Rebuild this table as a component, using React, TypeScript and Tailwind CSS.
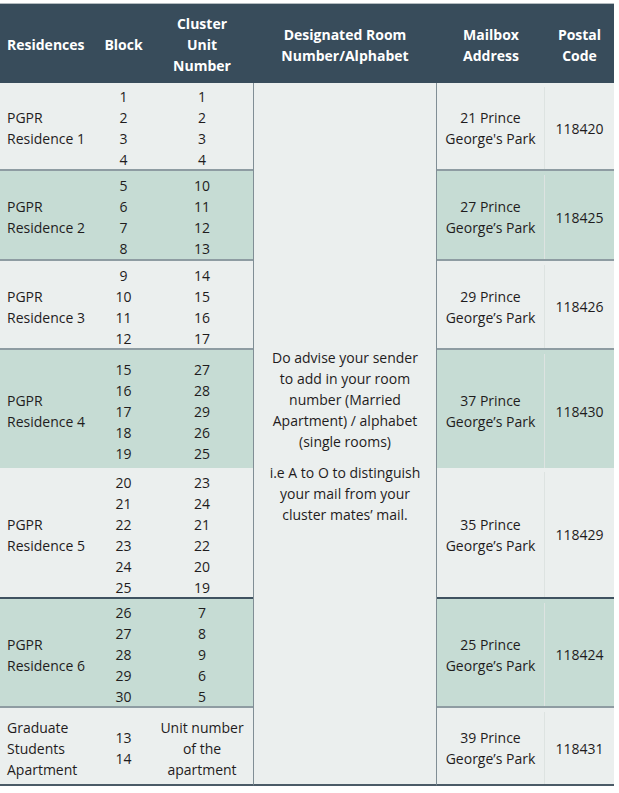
type Row = {
  name: string[];
  blocks: string[];
  units: string[];
  address: string[];
  postal: string;
  green: boolean;
  height: string;
  border: string;
};

const rows: Row[] = [
  {
    name: ["PGPR", "Residence 1"],
    blocks: ["1", "2", "3", "4"],
    units: ["1", "2", "3", "4"],
    address: ["21 Prince", "George's Park"],
    postal: "118420",
    green: false,
    height: "h-[88px]",
    border: "border-b-2 border-[#8e9ca2]",
  },
  {
    name: ["PGPR", "Residence 2"],
    blocks: ["5", "6", "7", "8"],
    units: ["10", "11", "12", "13"],
    address: ["27 Prince", "George’s Park"],
    postal: "118425",
    green: true,
    height: "h-[90px]",
    border: "border-b-2 border-[#8e9ca2]",
  },
  {
    name: ["PGPR", "Residence 3"],
    blocks: ["9", "10", "11", "12"],
    units: ["14", "15", "16", "17"],
    address: ["29 Prince", "George’s Park"],
    postal: "118426",
    green: false,
    height: "h-[89px]",
    border: "border-b-2 border-[#8e9ca2]",
  },
  {
    name: ["PGPR", "Residence 4"],
    blocks: ["15", "16", "17", "18", "19"],
    units: ["27", "28", "29", "26", "25"],
    address: ["37 Prince", "George’s Park"],
    postal: "118430",
    green: true,
    height: "h-[118px]",
    border: "",
  },
  {
    name: ["PGPR", "Residence 5"],
    blocks: ["20", "21", "22", "23", "24", "25"],
    units: ["23", "24", "21", "22", "20", "19"],
    address: ["35 Prince", "George’s Park"],
    postal: "118429",
    green: false,
    height: "h-[131px]",
    border: "border-b-2 border-[#3f5260]",
  },
  {
    name: ["PGPR", "Residence 6"],
    blocks: ["26", "27", "28", "29", "30"],
    units: ["7", "8", "9", "6", "5"],
    address: ["25 Prince", "George’s Park"],
    postal: "118424",
    green: true,
    height: "h-[109px]",
    border: "border-b-2 border-[#8e9ca2]",
  },
  {
    name: ["Graduate", "Students", "Apartment"],
    blocks: ["13", "14"],
    units: ["Unit number", "of the", "apartment"],
    address: ["39 Prince", "George’s Park"],
    postal: "118431",
    green: false,
    height: "h-[78px]",
    border: "border-b-2 border-[#4b5b67]",
  },
];

const Lines = ({ items }: { items: string[] }) => (
  <>
    {items.map((t, i) => (
      <div key={i}>{t}</div>
    ))}
  </>
);

const App = () => {
  return (
    <main
      className="w-[619px] h-[793px] bg-white pt-[3px] text-[14px] leading-[21px] text-[#1f1c1d]"
      style={{ fontFamily: '"Open Sans", "Noto Sans", sans-serif' }}
    >
      <div className="w-[614px] border-t border-[#b4bcc0]">
        {/* header */}
        <div className="flex h-[79px] pt-[2px] bg-[#384c5b] text-white font-bold text-center">
          <div className="w-[96px] flex items-center pl-[7px] text-left">Residences</div>
          <div className="w-[55px] flex items-center justify-center">Block</div>
          <div className="w-[102px] flex items-center justify-center">
            Cluster
            <br />
            Unit
            <br />
            Number
          </div>
          <div className="w-[184px] flex items-center justify-center">
            Designated Room
            <br />
            Number/Alphabet
          </div>
          <div className="w-[108px] flex items-center justify-center">
            Mailbox
            <br />
            Address
          </div>
          <div className="w-[69px] flex items-center justify-center">
            Postal
            <br />
            Code
          </div>
        </div>

        <div className="flex">
          {/* left columns */}
          <div className="w-[253px] flex flex-col">
            {rows.map((r, i) => (
              <div
                key={i}
                className={`flex pt-[4px] ${r.height} ${r.border} ${r.green ? "bg-[#c6dcd4]" : "bg-[#ebefee]"}`}
              >
                <div className="w-[96px] flex flex-col justify-center pl-[7px]">
                  <Lines items={r.name} />
                </div>
                <div className="w-[55px] flex flex-col justify-center items-center">
                  <Lines items={r.blocks} />
                </div>
                <div className="w-[102px] flex flex-col justify-center items-center text-center">
                  <Lines items={r.units} />
                </div>
              </div>
            ))}
          </div>

          {/* designated room, spans all rows */}
          <div className="w-[184px] pt-[4px] flex flex-col justify-center items-center text-center bg-[#ebefee] border-x-[1.5px] border-[#808e95] border-b-2 border-b-[#4b5b67] gap-[10px]">
            <p>
              Do advise your sender
              <br />
              to add in your room
              <br />
              number (Married
              <br />
              Apartment) / alphabet
              <br />
              (single rooms)
            </p>
            <p>
              i.e A to O to distinguish
              <br />
              your mail from your
              <br />
              cluster mates’ mail.
            </p>
          </div>

          {/* right columns */}
          <div className="w-[177px] flex flex-col">
            {rows.map((r, i) => (
              <div
                key={i}
                className={`flex pt-[4px] ${r.height} ${r.border} ${r.green ? "bg-[#c6dcd4]" : "bg-[#ebefee]"}`}
              >
                <div className="w-[108px] flex flex-col justify-center items-center border-r border-[#dde3e1]">
                  <Lines items={r.address} />
                </div>
                <div className="w-[69px] flex items-center justify-center">{r.postal}</div>
              </div>
            ))}
          </div>
        </div>
      </div>
    </main>
  );
};

export default App;
